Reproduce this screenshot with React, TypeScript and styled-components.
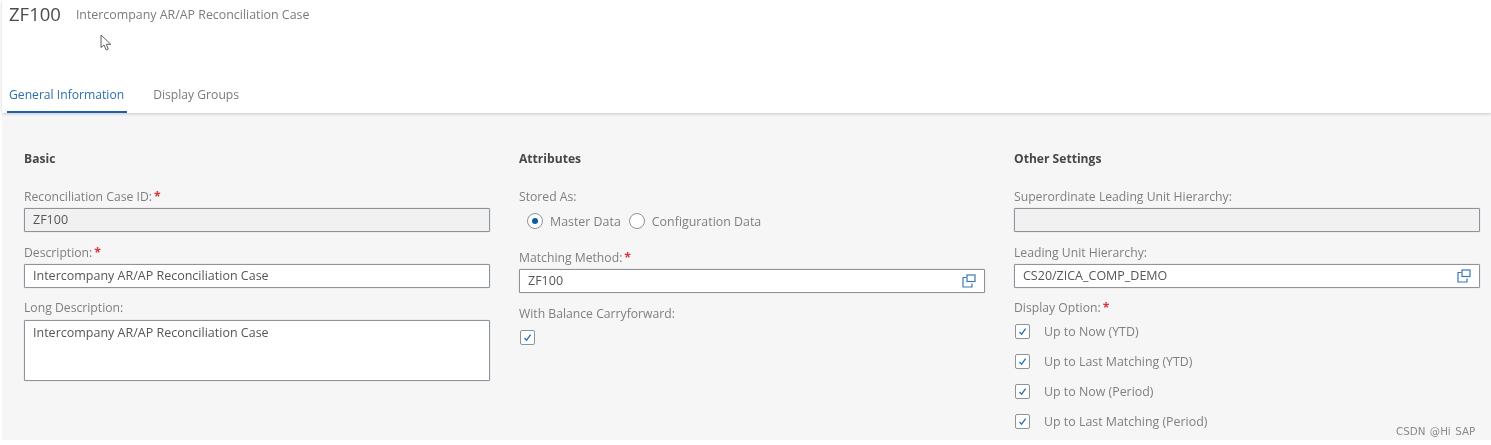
import React from "react";
import styled, { createGlobalStyle } from "styled-components";

const Global = createGlobalStyle`
  html, body { margin: 0; padding: 0; background: #fff; }
  body { font-family: "Open Sans", "Noto Sans", "Liberation Sans", sans-serif; color: #4a4a4a; }
`;

const Page = styled.div`
  position: relative;
  width: 1491px;
  height: 445px;
  overflow: hidden;
  background: #fff;
  filter: blur(0.4px);
`;

const Header = styled.header`
  height: 113px;
  margin-left: 2px;
  display: flex;
  flex-direction: column;
  position: relative;
  z-index: 1;
  background: #fff;
  box-shadow: 0 1px 3px rgba(0, 0, 0, 0.2);
`;

const TitleRow = styled.div`
  display: flex;
  align-items: flex-start;
  gap: 15px;
  padding: 3px 0 0 7px;
  height: 77px;
  box-sizing: border-box;
`;

const Title = styled.h1`
  margin: 0;
  font-size: 18.5px;
  line-height: 22px;
  font-weight: 400;
  color: #4c4c4c;
`;

const Subtitle = styled.span`
  margin-top: 1px;
  font-size: 12.4px;
  line-height: 22px;
  color: #7b7b7b;
`;

const Tabs = styled.nav`
  display: flex;
  gap: 24px;
  padding-left: 5px;
`;

const Tab = styled.div<{ $active?: boolean }>`
  height: 36px;
  box-sizing: border-box;
  padding: 8.5px 3px 0 2px;
  font-size: 12.15px;
  line-height: 18px;
  white-space: nowrap;
  color: ${(p) => (p.$active ? "#2f6fb0" : "#7b7b7b")};
  border-bottom: 2px solid ${(p) => (p.$active ? "#1b62a8" : "transparent")};
`;

const Content = styled.main`
  height: 327px;
  margin-left: 2px;
  box-sizing: border-box;
  padding: 37px 11px 0 22px;
  background: #f6f6f6;
  display: grid;
  grid-template-columns: 466px 466px 466px;
  column-gap: 29px;
  align-items: start;
`;

const Column = styled.section`
  display: flex;
  flex-direction: column;
`;

const Heading = styled.h2`
  margin: 0 0 19px;
  font-size: 12.1px;
  line-height: 18px;
  font-weight: 700;
  color: #474747;
`;

const Label = styled.div<{ $gap?: number }>`
  height: 18px;
  margin-top: ${(p) => p.$gap ?? 0}px;
  font-size: 12.2px;
  line-height: 19px;
  color: #7f7f7f;
  white-space: nowrap;
`;

const Star = styled.span`
  margin-left: 2px;
  color: #d8343a;
  font-weight: 700;
`;

const Field = styled.div<{ $readOnly?: boolean; $tall?: boolean }>`
  display: flex;
  align-items: ${(p) => (p.$tall ? "flex-start" : "center")};
  justify-content: space-between;
  box-sizing: border-box;
  height: ${(p) => (p.$tall ? "61px" : "24px")};
  margin-top: ${(p) => (p.$tall ? 4 : 3)}px;
  padding: ${(p) => (p.$tall ? "3px 8px 0" : "0 8px")};
  border: 1px solid #8b949c;
  border-radius: 1px;
  background: ${(p) => (p.$readOnly ? "#f1f1f1" : "#fff")};
  font-size: 12.5px;
  line-height: 18px;
  color: #565656;
  box-shadow: 0 0 1px rgba(100, 110, 120, 0.5);
`;

const RadioRow = styled.div`
  display: flex;
  align-items: center;
  height: 24px;
  padding-left: 8px;
  margin-top: 4px;
`;

const RadioCircle = styled.span<{ $on?: boolean }>`
  width: 16px;
  height: 16px;
  box-sizing: border-box;
  flex: none;
  border: 1px solid #8b949c;
  border-radius: 50%;
  background: #fff;
  display: flex;
  align-items: center;
  justify-content: center;
  &::after {
    content: "";
    display: ${(p) => (p.$on ? "block" : "none")};
    width: 6px;
    height: 6px;
    border-radius: 50%;
    background: #0a5ba6;
  }
`;

const RadioText = styled.span<{ $after: number }>`
  margin: 0 ${(p) => p.$after}px 0 7px;
  font-size: 12.4px;
  color: #7f7f7f;
  white-space: nowrap;
`;

const CheckRow = styled.div`
  display: flex;
  align-items: center;
  height: 30px;
  padding-left: 1px;
`;

const CheckBox = styled.span`
  width: 15px;
  height: 15px;
  box-sizing: border-box;
  flex: none;
  border: 1px solid #8b949c;
  border-radius: 2px;
  background: #fff;
  display: flex;
  align-items: center;
  justify-content: center;
`;

const CheckText = styled.span`
  margin-left: 14px;
  font-size: 12.4px;
  color: #7f7f7f;
  white-space: nowrap;
`;

const Cursor = styled.svg`
  position: absolute;
  left: 100px;
  top: 34px;
  z-index: 2;
`;

const Watermark = styled.div`
  position: absolute;
  left: 1396px;
  top: 423px;
  z-index: 2;
  font-family: "DejaVu Sans", sans-serif;
  font-size: 10.3px;
  line-height: 16px;
  color: #8a8a8a;
  white-space: nowrap;
  word-spacing: 1.2px;
`;

const Check = () => (
  <CheckBox>
    <svg width="9" height="9" viewBox="0 0 9 9" fill="none">
      <path d="M1.5 5 L3.6 7.2 L7.6 1.6" stroke="#2a6fb5" strokeWidth="1.3" />
    </svg>
  </CheckBox>
);

const ValueHelp = () => (
  <svg width="14" height="14" viewBox="0 0 14 14" fill="none" stroke="#3b78b4" strokeWidth="1.2">
    <path d="M4.5 3.5H1v9.5h9V9.5" />
    <rect x="5" y="1" width="8" height="6.5" />
  </svg>
);

const options = [
  "Up to Now (YTD)",
  "Up to Last Matching (YTD)",
  "Up to Now (Period)",
  "Up to Last Matching (Period)",
];

export default function App() {
  return (
    <Page>
      <Global />
      <Header>
        <TitleRow>
          <Title>ZF100</Title>
          <Subtitle>Intercompany AR/AP Reconciliation Case</Subtitle>
        </TitleRow>
        <Tabs>
          <Tab $active>General Information</Tab>
          <Tab>Display Groups</Tab>
        </Tabs>
      </Header>
      <Content>
        <Column>
          <Heading>Basic</Heading>
          <Label>
            Reconciliation Case ID:<Star>*</Star>
          </Label>
          <Field $readOnly>ZF100</Field>
          <Label $gap={11}>
            Description:<Star>*</Star>
          </Label>
          <Field>Intercompany AR/AP Reconciliation Case</Field>
          <Label $gap={10}>Long Description:</Label>
          <Field $tall>Intercompany AR/AP Reconciliation Case</Field>
        </Column>
        <Column>
          <Heading>Attributes</Heading>
          <Label>Stored As:</Label>
          <RadioRow>
            <RadioCircle $on />
            <RadioText $after={8}>Master Data</RadioText>
            <RadioCircle />
            <RadioText $after={0}>Configuration Data</RadioText>
          </RadioRow>
          <Label $gap={15}>
            Matching Method:<Star>*</Star>
          </Label>
          <Field>
            ZF100
            <ValueHelp />
          </Field>
          <Label $gap={11}>With Balance Carryforward:</Label>
          <CheckRow>
            <Check />
          </CheckRow>
        </Column>
        <Column>
          <Heading>Other Settings</Heading>
          <Label>Superordinate Leading Unit Hierarchy:</Label>
          <Field $readOnly />
          <Label $gap={11}>Leading Unit Hierarchy:</Label>
          <Field>
            CS20/ZICA_COMP_DEMO
            <ValueHelp />
          </Field>
          <Label $gap={10}>
            Display Option:<Star>*</Star>
          </Label>
          {options.map((o) => (
            <CheckRow key={o}>
              <Check />
              <CheckText>{o}</CheckText>
            </CheckRow>
          ))}
        </Column>
      </Content>
      <Cursor width="13" height="18" viewBox="0 0 13 18" fill="#fff" stroke="#5f5f5f" strokeWidth="1">
        <path d="M1 1 V13.5 L4 11 L6.2 16 L8.3 15 L6.2 10.3 L10.8 10.3 Z" />
      </Cursor>
      <Watermark>CSDN @Hi SAP</Watermark>
    </Page>
  );
}
